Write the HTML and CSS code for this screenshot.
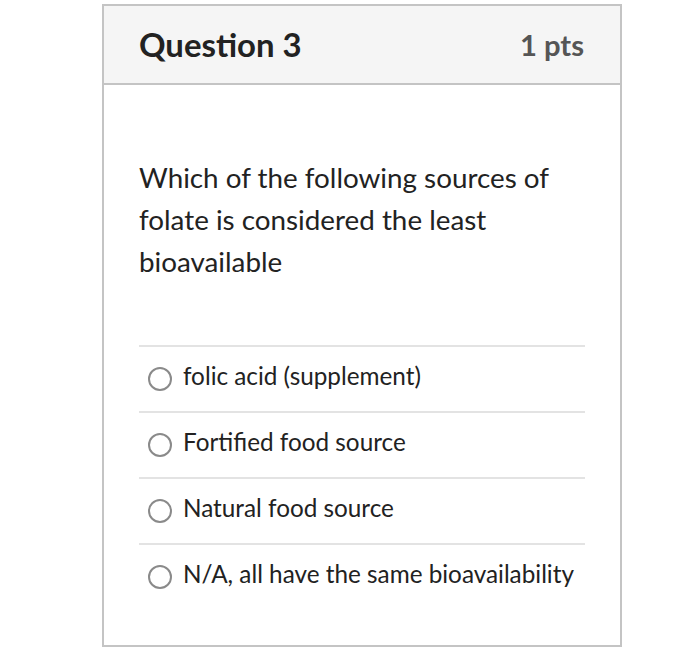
FILE: index.html
```html
<!DOCTYPE html>
<html>
<head>
<meta charset="utf-8">
<link rel="stylesheet" href="styles.css">
</head>
<body>
<div class="card">
  <div class="header">
    <div class="title">Question 3</div>
    <div class="pts">1 pts</div>
  </div>
  <div class="body">
    <p class="question">Which of the following sources of folate is considered the least bioavailable</p>
    <div class="answers">
      <div class="answer"><span class="radio"></span><span class="label">folic acid (supplement)</span></div>
      <div class="answer"><span class="radio"></span><span class="label">Fortified food source</span></div>
      <div class="answer"><span class="radio"></span><span class="label">Natural food source</span></div>
      <div class="answer"><span class="radio"></span><span class="label">N/A, all have the same bioavailability</span></div>
    </div>
  </div>
</div>
</body>
</html>
```

FILE: styles.css
```css
html, body {
  margin: 0;
  padding: 0;
  background: #fff;
}
body {
  font-family: Lato, "Open Sans", sans-serif;
  color: #2d3b45;
  padding: 4px 0 0 102px;
}
.card {
  width: 516px;
  height: 639px;
  border: 2px solid #c4c4c4;
  box-sizing: content-box;
}
.header {
  background: #f5f5f5;
  border-bottom: 2px solid #c4c4c4;
  display: flex;
  align-items: center;
  justify-content: space-between;
  padding: 0 36px 0 35px;
  box-sizing: border-box;
  height: 79px;
}
.title {
  font-size: 32.9px;
  font-weight: 700;
  color: #222;
}
.pts {
  font-size: 29.2px;
  font-weight: 700;
  color: #555;
}
.body {
  padding: 0 35px 0 35px;
}
.question {
  margin: 0;
  padding-top: 72px;
  font-size: 27.8px;
  line-height: 42px;
  color: #222;
  width: 440px;
}
.answers {
  margin-top: 62px;
}
.answer {
  height: 64px;
  border-top: 2px solid #e3e3e3;
  display: flex;
  align-items: center;
  padding-left: 9px;
}
.radio {
  width: 20px;
  height: 20px;
  border: 2px solid #8a8a8a;
  border-radius: 50%;
  margin-right: 11px;
  flex: none;
}
.label {
  font-size: 24.3px;
  color: #222;
  margin-top: -8px;
}
```
